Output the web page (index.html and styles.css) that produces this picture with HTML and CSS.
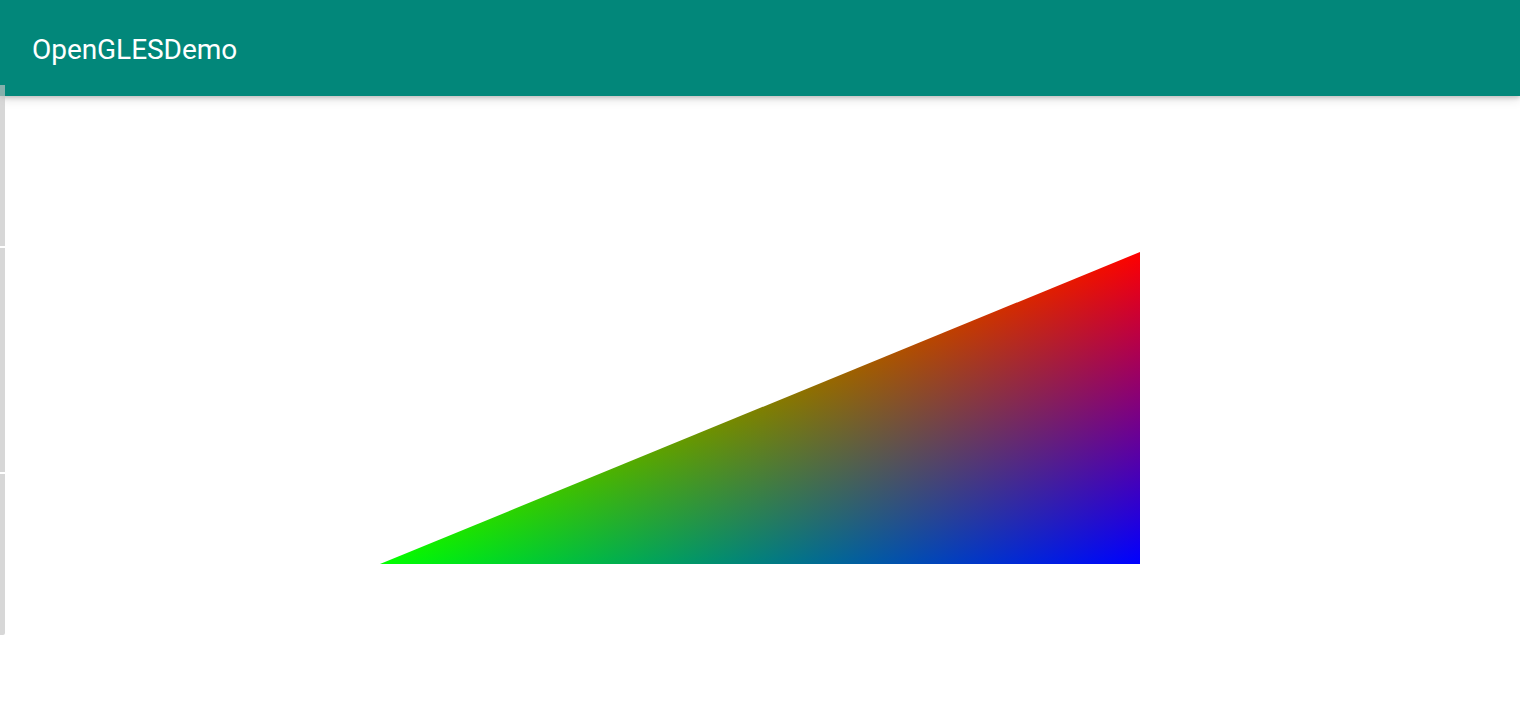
FILE: index.html
```html
<!DOCTYPE html>
<html>
<head>
<meta charset="utf-8">
<title>OpenGLESDemo</title>
<link rel="stylesheet" href="styles.css">
</head>
<body>
<header class="toolbar">
  <h1 class="title">OpenGLESDemo</h1>
</header>
<main class="surface">
  <div class="triangle"></div>
</main>
<div class="edge-bar">
  <div class="edge-seg seg-1"></div>
  <div class="edge-seg seg-2"></div>
  <div class="edge-seg seg-3"></div>
</div>
</body>
</html>
```
FILE: styles.css
```css
html, body {
  margin: 0;
  padding: 0;
  background: #ffffff;
  width: 1520px;
  height: 720px;
  overflow: hidden;
}
body {
  font-family: Roboto, "Noto Sans", sans-serif;
  position: relative;
}
.toolbar {
  height: 96px;
  box-sizing: border-box;
  background: #02877a;
  display: flex;
  align-items: center;
  padding-left: 32px;
  padding-top: 4px;
  box-shadow: 0 2px 4px rgba(0,0,0,0.18), 0 4px 10px rgba(0,0,0,0.10);
  position: relative;
  z-index: 1;
}
.title {
  margin: 0;
  color: #ffffff;
  font-size: 28px;
  font-weight: 400;
  line-height: 1;
  letter-spacing: -0.05px;
}
.surface {
  height: 624px;
  display: flex;
  align-items: flex-start;
}
.triangle {
  margin-left: 380px;
  margin-top: 156px;
  width: 760px;
  height: 312px;
  background-color: #000;
  background-image:
    linear-gradient(to top, #000 0%, #f00 100%),
    linear-gradient(to left, #000 0%, #0f0 100%),
    linear-gradient(to top left, #00f 0%, #000 50%);
  background-blend-mode: screen;
  clip-path: polygon(0 100%, 100% 0, 100% 100%);
}
.edge-bar {
  position: absolute;
  left: 0;
  top: 85px;
  width: 5px;
  display: flex;
  flex-direction: column;
  gap: 2px;
  z-index: 2;
}
.edge-seg {
  background: rgba(196,196,196,0.68);
  width: 5px;
}
.seg-1 { height: 161px; }
.seg-2 { height: 224px; }
.seg-3 { height: 161px; border-bottom-right-radius: 2px; }
```
